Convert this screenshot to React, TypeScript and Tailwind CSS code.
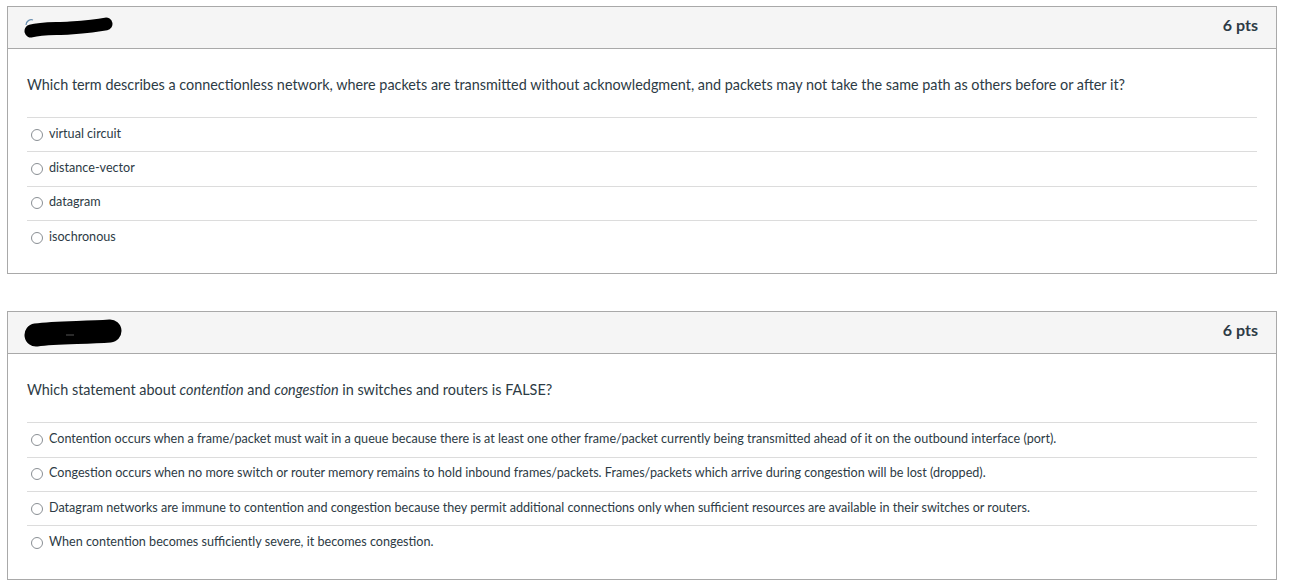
import React from "react";

const font = { fontFamily: "Lato, 'Open Sans', 'Liberation Sans', sans-serif" };

function Radio() {
  return (
    <span className="inline-block w-[12px] h-[12px] rounded-full border border-[#8a8f94] bg-white shrink-0" />
  );
}

function Blob({ variant }: { variant: 1 | 2 }) {
  if (variant === 1) {
    return (
      <svg width="92" height="22" viewBox="0 0 92 22" className="block">
        <path
          d="M9 15 C 20 12, 34 13, 48 12 C 62 11, 74 10, 84 8"
          stroke="#000"
          strokeWidth="13"
          strokeLinecap="round"
          fill="none"
        />
        <path d="M4 9 C 4 5, 8 3, 11 4" stroke="#6a8fb0" strokeWidth="1.2" fill="none" />
      </svg>
    );
  }
  return (
    <svg width="102" height="28" viewBox="0 0 102 28" className="block">
      <path
        d="M14 16 C 35 13, 60 14, 88 12"
        stroke="#000"
        strokeWidth="23"
        strokeLinecap="round"
        fill="none"
      />
      <path d="M44 16 L 52 16" stroke="#555" strokeWidth="1" />
    </svg>
  );
}

function Question({
  variant,
  question,
  options,
}: {
  variant: 1 | 2;
  question: React.ReactNode;
  options: string[];
}) {
  return (
    <div className="w-[1270px] border border-[#a9a9a9] bg-white text-[#2d3b45]">
      <div className="flex items-center justify-between bg-[#f5f5f5] border-b border-[#a9a9a9] pl-[14px] pr-[18px] h-[41.5px]">
        <Blob variant={variant} />
        <span className="text-[16px] font-bold leading-none mt-[-5px]">6 pts</span>
      </div>
      <div className="px-[19px] pt-[26.5px] pb-[19px]">
        <div className="text-[14.4px] leading-[20px]">{question}</div>
        <div className="mt-[22px]">
          {options.map((o) => (
            <div
              key={o}
              className="h-[34.33px] border-t border-[#dcdcdc] flex items-center gap-[6px] pl-[4px] box-border"
            >
              <Radio />
              <span className="text-[12.6px] leading-[16px] mt-[-2px]">{o}</span>
            </div>
          ))}
        </div>
      </div>
    </div>
  );
}

export default function App() {
  return (
    <div className="bg-white w-[1292px] h-[587px] pl-[7px] pt-[6px]" style={font}>
      <Question
        variant={1}
        question="Which term describes a connectionless network, where packets are transmitted without acknowledgment, and packets may not take the same path as others before or after it?"
        options={["virtual circuit", "distance-vector", "datagram", "isochronous"]}
      />
      <div className="h-[37px]" />
      <Question
        variant={2}
        question={
          <>
            Which statement about <em>contention</em> and <em>congestion</em> in switches and routers is FALSE?
          </>
        }
        options={[
          "Contention occurs when a frame/packet must wait in a queue because there is at least one other frame/packet currently being transmitted ahead of it on the outbound interface (port).",
          "Congestion occurs when no more switch or router memory remains to hold inbound frames/packets. Frames/packets which arrive during congestion will be lost (dropped).",
          "Datagram networks are immune to contention and congestion because they permit additional connections only when sufficient resources are available in their switches or routers.",
          "When contention becomes sufficiently severe, it becomes congestion.",
        ]}
      />
    </div>
  );
}
